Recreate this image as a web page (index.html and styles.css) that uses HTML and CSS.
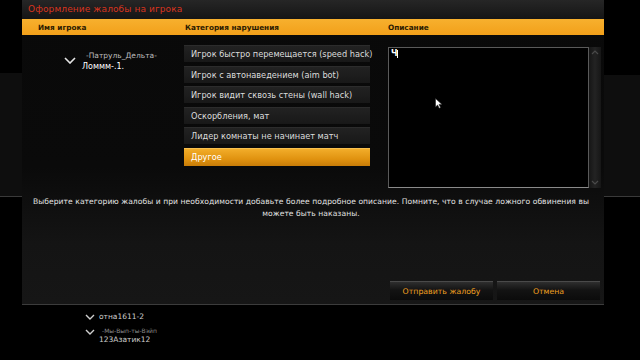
FILE: index.html
```html
<!DOCTYPE html>
<html lang="ru">
<head>
<meta charset="utf-8">
<link rel="stylesheet" href="styles.css">
</head>
<body>
<div class="screen">
  <div class="bg-panel bg-left"></div>
  <div class="bg-panel bg-right"></div>

  <div class="dialog">
    <div class="titlebar">Оформление жалобы на игрока</div>
    <div class="header">
      <span class="h-name">Имя игрока</span>
      <span class="h-cat">Категория нарушения</span>
      <span class="h-desc">Описание</span>
    </div>
    <div class="body">
      <div class="player">
        <svg class="chev" width="12" height="7" viewBox="0 0 12 7"><path d="M1 1 L6 6 L11 1" fill="none" stroke="#e6e6e6" stroke-width="1.6"/></svg>
        <div class="pnames">
          <div class="clan">-Патруль_Дельта-</div>
          <div class="nick">Ломмм-.1.</div>
        </div>
      </div>
      <div class="cats">
        <div class="cat">Игрок быстро перемещается (speed hack)</div>
        <div class="cat">Игрок с автонаведением (aim bot)</div>
        <div class="cat">Игрок видит сквозь стены (wall hack)</div>
        <div class="cat">Оскорбления, мат</div>
        <div class="cat">Лидер комнаты не начинает матч</div>
        <div class="cat active">Другое</div>
      </div>
      <div class="desc">
        <div class="textbox"><span class="typed">Ч</span><span class="caret"></span></div>
        <div class="scroll">
          <svg width="8" height="5" viewBox="0 0 8 5"><path d="M1 4 L4 1 L7 4" fill="none" stroke="#4a4a4a" stroke-width="1.2"/></svg>
          <svg width="8" height="5" viewBox="0 0 8 5"><path d="M1 1 L4 4 L7 1" fill="none" stroke="#4a4a4a" stroke-width="1.2"/></svg>
        </div>
      </div>
    </div>
    <p class="hint">Выберите категорию жалобы и при необходимости добавьте более подробное описание. Помните, что в случае ложного обвинения вы<br>можете быть наказаны.</p>
    <div class="actions">
      <button class="btn">Отправить жалобу</button>
      <button class="btn">Отмена</button>
    </div>
    <svg class="cursor" width="8" height="11" viewBox="0 0 8 11"><path d="M0.5 0.5 L0.5 9 L2.6 7 L4.2 10.3 L5.6 9.6 L4 6.4 L7 6.4 Z" fill="#fff" stroke="#222" stroke-width="0.6"/></svg>
  </div>

  <div class="list">
    <div class="row">
      <svg class="chev" width="10" height="6" viewBox="0 0 10 6"><path d="M1 1 L5 5 L9 1" fill="none" stroke="#cfcfcf" stroke-width="1.4"/></svg>
      <div class="pnames"><div class="nick2">отна1611-2</div></div>
    </div>
    <div class="row">
      <svg class="chev" width="10" height="6" viewBox="0 0 10 6"><path d="M1 1 L5 5 L9 1" fill="none" stroke="#cfcfcf" stroke-width="1.4"/></svg>
      <div class="pnames"><div class="clan2">-Мы-Вып-ты-Вэйп</div><div class="nick2">123Азатик12</div></div>
    </div>
  </div>
</div>
</body>
</html>
```
FILE: styles.css
```css
* { box-sizing: border-box; }
html, body { margin: 0; padding: 0; background: #000; }
body { font-family: "DejaVu Sans", "Liberation Sans", sans-serif; }
.screen { position: relative; width: 640px; height: 360px; overflow: hidden; background: #000; }

.bg-panel { position: absolute; background: #0e0e0e; border-bottom: 1px solid #3a3a3a; }
.bg-left { left: 0; top: 73px; width: 22px; height: 124px; }
.bg-right { left: 604px; top: 75px; width: 36px; height: 122px; }

.dialog {
  position: relative;
  margin-left: 22px;
  width: 582px;
  height: 305px;
  background: linear-gradient(#090909 0%, #0a0a0a 55%, #141414 80%, #161616 100%);
  border-bottom: 1px solid #3c3c3c;
  display: flex;
  flex-direction: column;
}
.titlebar {
  height: 19px;
  padding: 4px 0 0 6px;
  font-size: 9px;
  color: #d8341e;
  background: linear-gradient(#262626, #151515);
  letter-spacing: 0.1px;
}
.header {
  height: 16px;
  background: linear-gradient(#f7b02e, #f2a01a);
  display: flex;
  align-items: center;
  font-size: 7.3px;
  font-weight: bold;
  color: #2b1a00;
}
.h-name { margin-left: 16px; width: 147px; }
.h-cat { width: 203px; }

.body { display: flex; padding-top: 10px; height: 153px; }
.player { width: 162px; display: flex; padding: 6px 0 0 42px; gap: 6px; }
.player .chev { margin-top: 6px; }
.clan { font-size: 7.5px; color: #bdbdbd; margin-left: 4px; line-height: 10px; }
.nick { font-size: 8px; color: #fff; line-height: 11px; }

.cats { width: 186px; display: flex; flex-direction: column; gap: 3.5px; }
.cat {
  height: 17px;
  background: linear-gradient(#222, #181818);
  border-top: 1px solid #2c2c2c;
  color: #dcdcdc;
  font-size: 8.2px;
  line-height: 16px;
  padding-left: 7px;
  white-space: nowrap;
}
.cat.active {
  background: linear-gradient(#f2ad2a, #e0920f 60%, #c77c08);
  border-top: 1px solid #f8c050;
  color: #fff;
  height: 18px;
}

.desc { margin-left: 18px; display: flex; padding-top: 2px; height: 143px; }
.textbox {
  width: 201px;
  height: 141px;
  background: #000;
  border: 1px solid #5a5a5a;
  border-bottom-color: #8a8a8a;
  padding: 1px 2px;
  display: flex;
  align-items: flex-start;
}
.typed { color: #fff; font-size: 8px; line-height: 9px; font-weight: bold; }
.caret { width: 1px; height: 8px; background: #fff; margin-top: 1px; }
.scroll {
  width: 12px;
  height: 141px;
  background: linear-gradient(90deg, #161616, #232323, #161616);
  display: flex;
  flex-direction: column;
  justify-content: space-between;
  align-items: center;
  padding: 3px 0;
}

.hint {
  margin: 8px 0 0 0;
  text-align: center;
  font-size: 7.6px;
  line-height: 12px;
  color: #e2e2e2;
  letter-spacing: 0.05px;
  padding: 0 14px 0 10px;
}
.actions { margin-top: auto; display: flex; justify-content: flex-end; gap: 4px; padding: 0 4px 4px 0; }
.btn {
  width: 103px;
  height: 19px;
  background: linear-gradient(#2e2e2e, #131313 45%, #0b0b0b);
  border: none;
  border-top: 1px solid #4a4a4a;
  color: #f0a020;
  font-family: "DejaVu Sans", "Liberation Sans", sans-serif;
  font-size: 7.8px;
  padding: 0;
}

.cursor { position: absolute; left: 413px; top: 98px; }

.list { padding: 7px 0 0 85px; display: flex; flex-direction: column; gap: 5px; }
.row { display: flex; gap: 4px; align-items: flex-start; }
.row .chev { margin-top: 2px; }
.nick2 { font-size: 7.5px; color: #cfcfcf; line-height: 10px; }
.clan2 { font-size: 6px; color: #8a8a8a; line-height: 8px; margin-left: 3px; }
```
